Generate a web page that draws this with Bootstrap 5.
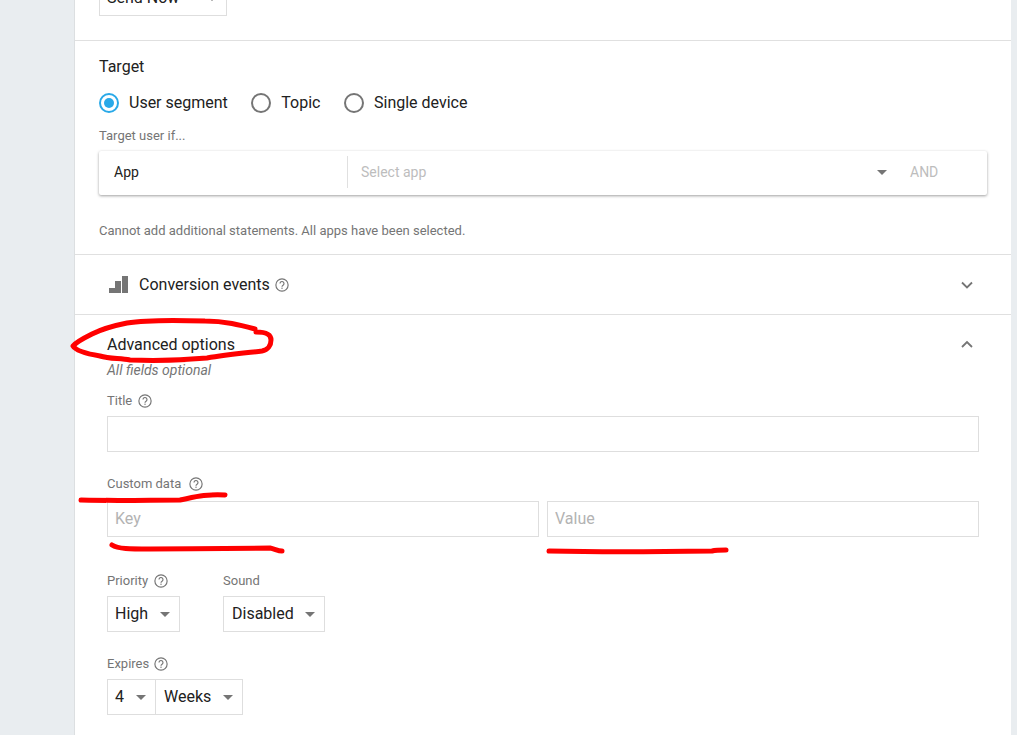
<!DOCTYPE html>
<html lang="en">
<head>
<meta charset="utf-8">
<title>Notification composer</title>
<link rel="stylesheet" href="https://cdn.jsdelivr.net/npm/bootstrap@5.3.0/dist/css/bootstrap.min.css">
<style>
html,body{height:735px;overflow:hidden}
body{background:#e9edf0;font-family:Roboto,"Liberation Sans",sans-serif;color:#212121;position:relative}
.sheet{margin:-20px 6px 0 74px;background:#fff;border-left:1px solid #dcdfe1;height:755px}
.zone{border-bottom:1px solid #e0e0e0}
.zone-send{height:61px;padding-left:24px}
.zone-target{height:214px;padding:17px 24px 0}
.zone-conv{height:60px;padding:0 37px 0 33px}
.zone-adv{padding:0 32px}
.fake-sel{display:inline-flex;align-items:center;height:36px;border:1px solid #dedede;padding:0 9px 0 7px;font-size:16px;line-height:1;background:#fff;color:#212121}
.caret{width:0;height:0;border-left:5px solid transparent;border-right:5px solid transparent;border-top:5px solid #757575;display:block;margin-left:auto}
.send-sel{width:128px}
.t-head{font-size:16px;line-height:18px}
.radios{margin-top:17px;height:20px;font-size:16px}
.rad{width:20px;height:20px;border-radius:50%;border:2px solid #757575;flex:none;position:relative}
.rad.on{border-color:#29a9e8}
.rad.on::after{content:"";position:absolute;inset:3px;border-radius:50%;background:#29a9e8}
.rad-txt{margin-left:10px}
.rad-next{margin-left:23.5px}
.mini{font-size:13px;line-height:14px;color:#757575}
.stmt{margin-top:8px;height:44px;padding-bottom:2px;border-radius:2px;box-shadow:0 1px 3px rgba(0,0,0,.38);background:#fff;font-size:14px}
.stmt-a{width:248px;padding-left:15px;color:#212121}
.stmt-b{flex:1;height:32px;border-left:1px solid #e0e0e0;padding-left:13px;padding-right:23px;color:#bdbdbd}
.stmt-and{width:77px;color:#bdbdbd}
.note{margin-top:29px}
.ttl{font-size:16px;line-height:18px}
.conv-ttl{margin-left:11px}
.conv-ask{margin-left:5px;margin-top:1px}
.chev-down{margin-top:2px}
.chev-up{margin-top:-2px}
.adv-head{padding:21px 5px 0 0}
.sub{font-size:14px;line-height:16px;font-style:italic;color:#757575;margin-top:8px}
.ask{width:14px;height:14px;display:block;flex:none}
.lab{font-size:13px;line-height:14px;color:#757575}
.lab-title{margin-top:16px;gap:6px}
.lab-custom{margin-top:25px;gap:8px}
.lab-prio{gap:6px}
.lab-exp{margin-top:25px;gap:5px}
.row-prio{margin-top:37px;gap:43px}
.after-lab{margin-top:8px}
.after-custom{margin-top:10px}
.fld{display:block;width:100%;height:36px;border:1px solid #dedede;padding:0 7px 2px;font-size:16px;background:#fff;color:#212121;border-radius:0}
.fld::placeholder{color:#b3b3b3;opacity:1}
.fld:focus{outline:none}
.sel-high{width:73px}
.sel-dis{width:102px;padding-left:8px}
.sel-4{width:49px}
.sel-wk{width:88px;margin-left:-1px;padding-left:8px}
.ink{position:absolute;left:0;top:0;pointer-events:none}
</style>
</head>
<body>
<svg width="0" height="0" class="d-block position-absolute" aria-hidden="true"><defs><symbol id="q" viewBox="0 0 24 24"><circle cx="12" cy="12" r="10.5" fill="none" stroke="#757575" stroke-width="2"/><path d="M8.6 9.4a3.4 3.4 0 1 1 5.2 2.9c-1.2.8-1.8 1.3-1.8 2.7" fill="none" stroke="#757575" stroke-width="2"/><rect x="11" y="16.5" width="2" height="2.2" fill="#757575"/></symbol></defs></svg>
<div class="sheet">
  <div class="zone zone-send">
    <div class="fake-sel send-sel"><span>Send Now</span><span class="caret"></span></div>
  </div>
  <div class="zone zone-target">
    <div class="t-head">Target</div>
    <div class="radios d-flex align-items-center">
      <span class="rad on"></span><span class="rad-txt">User segment</span>
      <span class="rad rad-next"></span><span class="rad-txt">Topic</span>
      <span class="rad rad-next"></span><span class="rad-txt">Single device</span>
    </div>
    <div class="mini mt-3">Target user if...</div>
    <div class="stmt d-flex align-items-center">
      <div class="stmt-a">App</div>
      <div class="stmt-b d-flex align-items-center"><span>Select app</span><span class="caret"></span></div>
      <div class="stmt-and">AND</div>
    </div>
    <div class="mini note">Cannot add additional statements. All apps have been selected.</div>
  </div>
  <div class="zone zone-conv d-flex align-items-center justify-content-between">
    <div class="d-flex align-items-center">
      <svg width="20" height="20" viewBox="0 0 20 20" aria-hidden="true"><path fill="#757575" d="M1 13h6v5H1zM7 6h6v12H7zM14 1h6v17h-6z"/></svg>
      <span class="ttl conv-ttl">Conversion events</span>
      <svg class="ask conv-ask" aria-hidden="true"><use href="#q"/></svg>
    </div>
    <svg class="chev-down" width="14" height="9" viewBox="0 0 14 9" aria-hidden="true"><path d="M2 1.5l5 5 5-5" fill="none" stroke="#757575" stroke-width="1.8"/></svg>
  </div>
  <div class="zone-adv">
    <div class="adv-head d-flex align-items-center justify-content-between">
      <span class="ttl">Advanced options</span>
      <svg class="chev-up" width="14" height="9" viewBox="0 0 14 9" aria-hidden="true"><path d="M2 7l5-5 5 5" fill="none" stroke="#757575" stroke-width="1.8"/></svg>
    </div>
    <div class="sub">All fields optional</div>
    <div class="lab lab-title d-flex align-items-center"><span>Title</span><svg class="ask" aria-hidden="true"><use href="#q"/></svg></div>
    <input class="fld after-lab" type="text" aria-label="Title">
    <div class="lab lab-custom d-flex align-items-center"><span>Custom data</span><svg class="ask" aria-hidden="true"><use href="#q"/></svg></div>
    <div class="d-flex gap-2 after-custom">
      <input class="fld" type="text" placeholder="Key" aria-label="Key">
      <input class="fld" type="text" placeholder="Value" aria-label="Value">
    </div>
    <div class="d-flex row-prio">
      <div>
        <div class="lab lab-prio d-flex align-items-center"><span>Priority</span><svg class="ask" aria-hidden="true"><use href="#q"/></svg></div>
        <div class="fake-sel sel-high after-lab"><span>High</span><span class="caret"></span></div>
      </div>
      <div>
        <div class="lab">Sound</div>
        <div class="fake-sel sel-dis after-lab"><span>Disabled</span><span class="caret"></span></div>
      </div>
    </div>
    <div class="lab lab-exp d-flex align-items-center"><span>Expires</span><svg class="ask" aria-hidden="true"><use href="#q"/></svg></div>
    <div class="d-flex after-lab">
      <div class="fake-sel sel-4"><span>4</span><span class="caret"></span></div>
      <div class="fake-sel sel-wk"><span>Weeks</span><span class="caret"></span></div>
    </div>
  </div>
</div>
<svg class="ink" width="1017" height="735" viewBox="0 0 1017 735" aria-hidden="true">
  <g fill="none" stroke="#ff0000" stroke-width="5" stroke-linecap="round" stroke-linejoin="round">
    <path d="M255 329C240 325 225 321 205 321C175 320 145 320 127 323C112 326 100 330 92 334C84 338 76 342 73 346C76 351 88 354 100 356C110 359 120 358 130 360C155 361 185 360 207 358C225 355 245 353 262 351C268 350 271 345 271 340C271 334 266 332 256 332"/>
    <path d="M81 500C120 501 150 500 180 500C195 497 205 494 225 495"/>
    <path d="M112 545C118 549 130 549 150 549C190 549 240 548 270 548C275 549 278 551 282 551"/>
    <path d="M549 551C590 552 650 552 712 551C716 550 720 550 726 550"/>
  </g>
</svg>
<script src="https://cdn.jsdelivr.net/npm/bootstrap@5.3.0/dist/js/bootstrap.bundle.min.js"></script>
</body>
</html>
